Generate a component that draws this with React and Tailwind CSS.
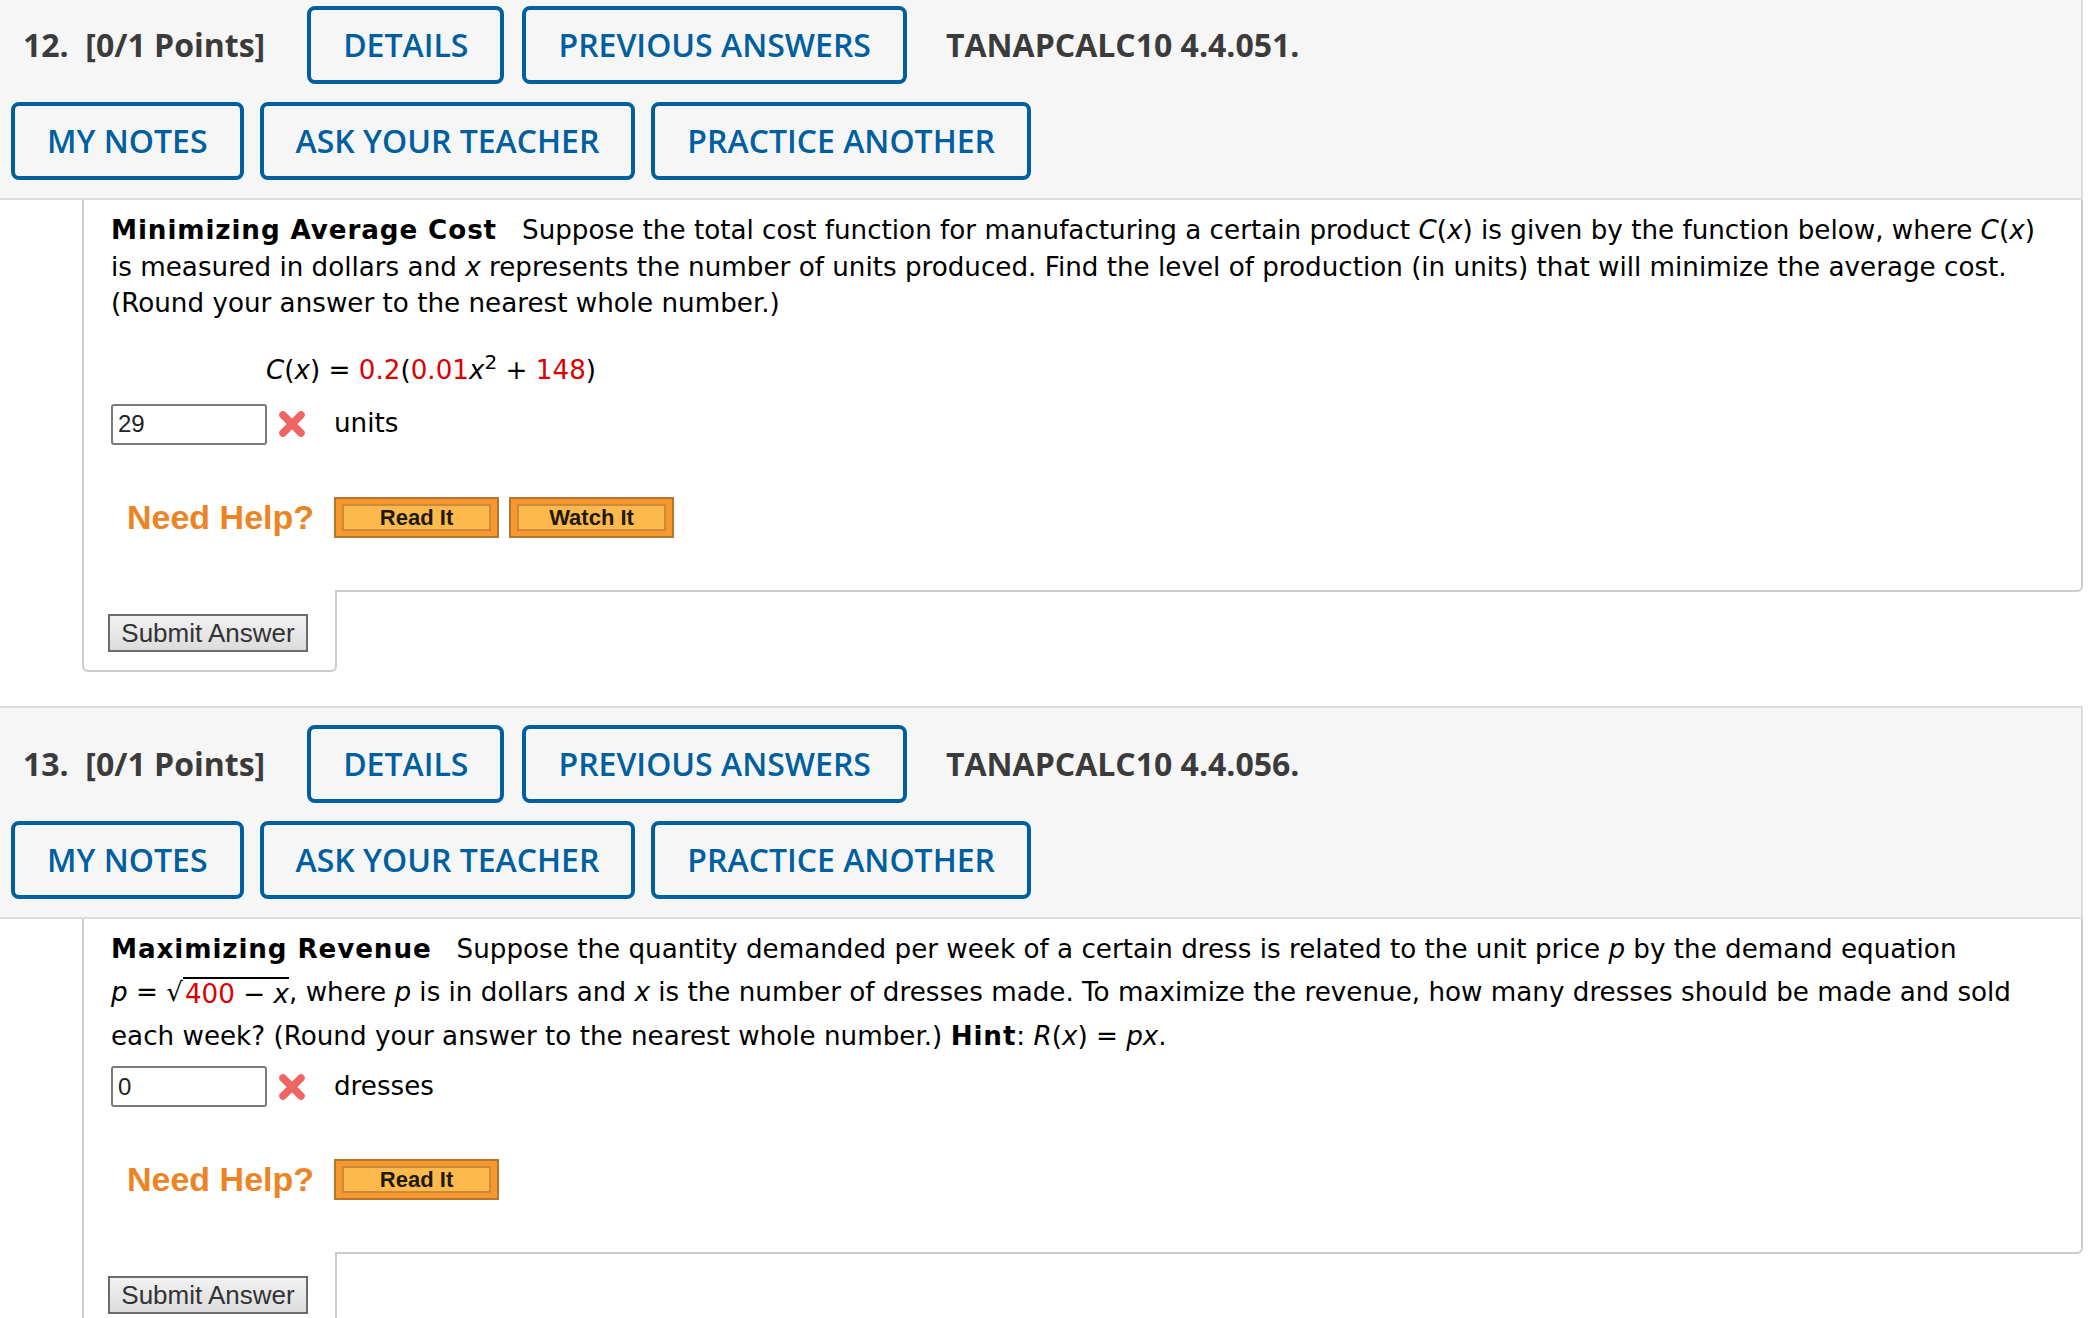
const red = 'text-[#dd0000]'

function HeadButton({ children }) {
  return (
    <button
      type="button"
      className="flex h-[78px] items-center rounded-[8px] border-4 border-[#005f9e] bg-[#f6f6f6] px-[32px] text-[32px] font-semibold text-[#005f9e]"
    >
      {children}
    </button>
  )
}

function Header({ num, code }) {
  return (
    <div className="border-y-2 border-r-2 border-[#dddddd] bg-[#f6f6f6] pt-[17px] pb-[18px] pl-[11px] font-['Open_Sans',sans-serif]">
      <div className="flex items-center">
        <span className="ml-[12px] mr-[42px] text-[32px] font-bold text-[#3b3b3b]">
          {num}.&nbsp; [0/1 Points]
        </span>
        <div className="flex gap-[18px]">
          <HeadButton>DETAILS</HeadButton>
          <HeadButton>PREVIOUS ANSWERS</HeadButton>
        </div>
        <span className="ml-[39px] text-[32px] font-bold text-[#3b3b3b]">TANAPCALC10 {code}</span>
      </div>
      <div className="mt-[18px] flex gap-[16px]">
        <HeadButton>MY NOTES</HeadButton>
        <HeadButton>ASK YOUR TEACHER</HeadButton>
        <HeadButton>PRACTICE ANOTHER</HeadButton>
      </div>
    </div>
  )
}

function WrongMark() {
  return (
    <svg width="30" height="30" viewBox="0 0 30 30" className="ml-[10px]">
      <path d="M6 6 L24 24 M24 6 L6 24" stroke="#ef5454" strokeWidth="7.5" strokeLinecap="round" opacity="0.9" />
    </svg>
  )
}

function Answer({ value, unit }) {
  return (
    <div className="flex items-center">
      <div className="flex h-[41px] w-[156px] items-center rounded-[3px] border-2 border-[#7a7a7a] bg-white pl-[5px] font-['Liberation_Sans',sans-serif] text-[24px] text-[#222]">
        {value}
      </div>
      <WrongMark />
      <span className="ml-[27px]">{unit}</span>
    </div>
  )
}

function HelpButton({ children }) {
  return (
    <div className="flex h-[41px] w-[165px] border-2 border-[#b8742f] bg-[#f7982c] px-[6px] py-[5px]">
      <div className="flex flex-1 items-center justify-center border-2 border-[#c98a3f] bg-[#fdb94b] font-['Liberation_Sans',sans-serif] text-[22px] font-bold text-[#1e1a12]">
        {children}
      </div>
    </div>
  )
}

function Question({ num, code, children, value, unit, buttons, textTop, answerTop }) {
  return (
    <section className="w-[2083px]">
      <Header num={num} code={code} />
      <div className="ml-[82px] rounded-br-[6px] border-r-2 border-b-2 border-l-2 border-[#cccccc] pl-[27px] pb-[47px] font-['DejaVu_Sans',sans-serif] text-[26.2px] text-black">
        <div className={textTop}>{children}</div>
        <div className={answerTop}>
          <Answer value={value} unit={unit} />
        </div>
        <div className="mt-[47px] flex items-center gap-[10px]">
          <span className="ml-[16px] mr-[10px] font-['Liberation_Sans',sans-serif] text-[34px] font-bold text-[#ec8424]">
            Need Help?
          </span>
          {buttons.map((b) => (
            <HelpButton key={b}>{b}</HelpButton>
          ))}
        </div>
      </div>
      <div className="-mt-[2px] ml-[82px] h-[82px] w-[255px] rounded-b-[6px] border-x-2 border-b-2 border-[#cccccc] bg-white pt-[24px] pl-[24px]">
        <button
          type="button"
          className="h-[38px] w-[200px] border-2 border-[#6b6b6b] bg-gradient-to-b from-[#f2f2f2] to-[#dcdcdc] font-['Liberation_Sans',sans-serif] text-[26px] leading-none text-[#333]"
        >
          Submit Answer
        </button>
      </div>
    </section>
  )
}

export default function App() {
  return (
    <div className="min-h-screen bg-white">
      <div className="-mt-[13px]">
        <Question
          num="12"
          code="4.4.051."
          value="29"
          unit="units"
          buttons={['Read It', 'Watch It']}
          textTop="pt-[12px]"
          answerTop="mt-[16px]"
        >
          <p className="leading-[36.5px]">
            <b className="tracking-[0.9px]">Minimizing Average Cost</b>&nbsp;&nbsp; Suppose the total cost function for
            manufacturing a certain product <i>C</i>(<i>x</i>) is given by the function below, where <i>C</i>(<i>x</i>)
            <br />
            is measured in dollars and <i>x</i> represents the number of units produced. Find the level of production
            (in units) that will minimize the average cost.
            <br />
            (Round your answer to the nearest whole number.)
          </p>
          <p className="mt-[30px] ml-[155px] leading-[36px]">
            <i>C</i>(<i>x</i>) = <span className={red}>0.2</span>(<span className={red}>0.01</span>
            <i>x</i>
            <sup className="text-[20px]">2</sup> + <span className={red}>148</span>)
          </p>
        </Question>
      </div>
      <div className="mt-[34px]">
        <Question
          num="13"
          code="4.4.056."
          value="0"
          unit="dresses"
          buttons={['Read It']}
          textTop="pt-[9px]"
          answerTop="mt-[8px]"
        >
          <p className="leading-[43.5px]">
            <b className="tracking-[0.9px]">Maximizing Revenue</b>&nbsp;&nbsp; Suppose the quantity demanded per week of a
            certain dress is related to the unit price <i>p</i> by the demand equation
            <br />
            <i>p</i> ={' '}
            <span className="inline-flex items-end">
              <span className="leading-[34px]">√</span>
              <span className="border-t-2 border-black pl-[2px] leading-[30px]">
                <span className={red}>400</span> − <i>x</i>
              </span>
            </span>
            , where <i>p</i> is in dollars and <i>x</i> is the number of dresses made. To maximize the revenue, how many
            dresses should be made and sold
            <br />
            each week? (Round your answer to the nearest whole number.) <b className="tracking-[0.9px]">Hint</b>:{' '}
            <i>R</i>(<i>x</i>) = <i>px</i>.
          </p>
        </Question>
      </div>
    </div>
  )
}
